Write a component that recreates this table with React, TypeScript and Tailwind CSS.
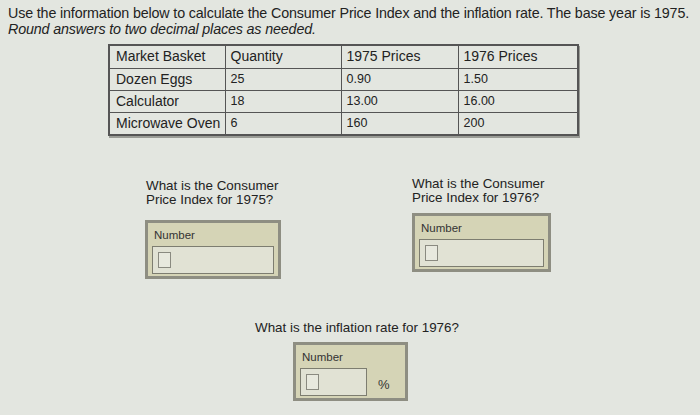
import React from 'react';

const rows = [
  ['Dozen Eggs', '25', '0.90', '1.50'],
  ['Calculator', '18', '13.00', '16.00'],
  ['Microwave Oven', '6', '160', '200'],
];

const NumberBox = ({ w, inputW, pct }: { w: string; inputW: string; pct?: boolean }) => (
  <div className={`${w} border-[3px] border-[#8e8e82] bg-[#d5d4b6] px-[4px] pt-[6px] pb-[2px]`}>
    <div className="text-[11.5px] leading-[13px] text-[#333] pl-[2px]">Number</div>
    <div className="flex items-center mt-[4px]">
      <div className={`${inputW} h-[28px] border border-[#7d7d70] bg-[#e1e2d4] flex items-center pl-[5px]`}>
        <div className="w-[13px] h-[16px] border border-[#8a8a80] bg-[#e8e9de]" />
      </div>
      {pct && <span className="ml-[11px] mt-[6px] text-[13px] text-[#333]">%</span>}
    </div>
  </div>
);

export default function App() {
  return (
    <div className="w-[700px] h-[415px] bg-[#e3e6e0] text-[#222] overflow-hidden" style={{ fontFamily: '"Liberation Sans", Arial, sans-serif' }}>
      <div className="pl-[8px] pt-[6px] text-[14.3px] leading-[15px] tracking-[-0.15px] whitespace-nowrap">
        <p>Use the information below to calculate the Consumer Price Index and the inflation rate. The base year is 1975.</p>
        <p className="italic mt-[1px]">Round answers to two decimal places as needed.</p>
      </div>

      <table className="ml-[108px] mt-[7px] border-collapse border-2 border-[#555] shadow-[1px_2px_0_#9a9c96]">
        <thead>
          <tr className="h-[23px] text-[14px]">
            <th className="w-[116px] border border-[#555] font-normal text-left pl-[6px]">Market Basket</th>
            <th className="w-[116px] border border-[#555] font-normal text-left pl-[5px]">Quantity</th>
            <th className="w-[117px] border border-[#555] font-normal text-left pl-[5px]">1975 Prices</th>
            <th className="w-[120px] border border-[#555] font-normal text-left pl-[5px]">1976 Prices</th>
          </tr>
        </thead>
        <tbody>
          {rows.map((r) => (
            <tr key={r[0]} className="h-[22px]">
              <td className="border border-[#555] text-[14px] pl-[6px] whitespace-nowrap">{r[0]}</td>
              <td className="border border-[#555] text-[12.5px] pl-[5px]">{r[1]}</td>
              <td className="border border-[#555] text-[12.5px] pl-[5px]">{r[2]}</td>
              <td className="border border-[#555] text-[12.5px] pl-[5px]">{r[3]}</td>
            </tr>
          ))}
        </tbody>
      </table>

      <div className="flex mt-[43px]">
        <div className="ml-[145px] w-[136px]">
          <p className="text-[13.4px] leading-[14px] pl-[1px] whitespace-nowrap">What is the Consumer<br />Price Index for 1975?</p>
          <div className="mt-[13px]">
            <NumberBox w="w-[136px]" inputW="w-[124px]" />
          </div>
        </div>
        <div className="ml-[131px] w-[139px] -mt-[2px]">
          <p className="text-[13.4px] leading-[14px] whitespace-nowrap">What is the Consumer<br />Price Index for 1976?</p>
          <div className="mt-[8px]">
            <NumberBox w="w-[139px]" inputW="w-[127px]" />
          </div>
        </div>
      </div>

      <div className="ml-[255px] mt-[42px]">
        <p className="text-[13.4px] leading-[14px]">What is the inflation rate for 1976?</p>
        <div className="ml-[38px] mt-[7px]">
          <NumberBox w="w-[115px]" inputW="w-[67px]" pct />
        </div>
      </div>
    </div>
  );
}
